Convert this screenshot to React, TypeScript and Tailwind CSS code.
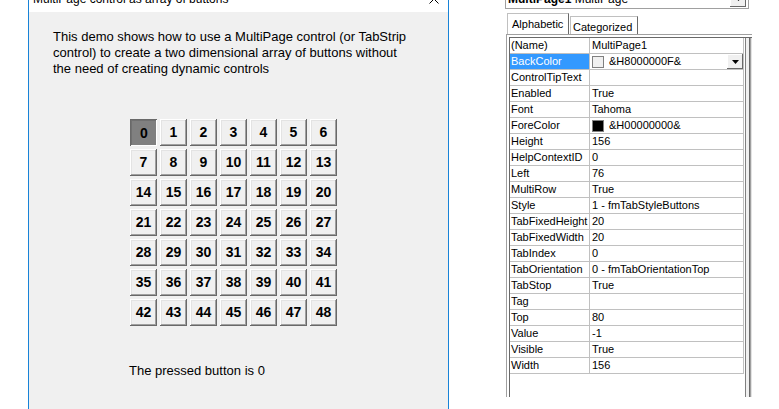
import React from "react";

const props: { name: string; value: string; swatch?: string; selected?: boolean; drop?: boolean }[] = [
  { name: "(Name)", value: "MultiPage1" },
  { name: "BackColor", value: "&H8000000F&", swatch: "bg-[#f0f0f0]", selected: true, drop: true },
  { name: "ControlTipText", value: "" },
  { name: "Enabled", value: "True" },
  { name: "Font", value: "Tahoma" },
  { name: "ForeColor", value: "&H00000000&", swatch: "bg-black" },
  { name: "Height", value: "156" },
  { name: "HelpContextID", value: "0" },
  { name: "Left", value: "76" },
  { name: "MultiRow", value: "True" },
  { name: "Style", value: "1 - fmTabStyleButtons" },
  { name: "TabFixedHeight", value: "20" },
  { name: "TabFixedWidth", value: "20" },
  { name: "TabIndex", value: "0" },
  { name: "TabOrientation", value: "0 - fmTabOrientationTop" },
  { name: "TabStop", value: "True" },
  { name: "Tag", value: "" },
  { name: "Top", value: "80" },
  { name: "Value", value: "-1" },
  { name: "Visible", value: "True" },
  { name: "Width", value: "156" },
];

const DownArrow = () => (
  <svg width="7" height="4" viewBox="0 0 7 4">
    <path d="M0 0h7L3.5 4z" fill="#000" />
  </svg>
);

export default function App() {
  const pressed = 0;
  const cells = Array.from({ length: 49 }, (_, i) => i);

  return (
    <div className="w-[779px] h-[409px] bg-white overflow-hidden flex font-['Liberation_Sans',Arial,sans-serif] text-black">
      {/* UserForm window */}
      <div className="ml-[28px] w-[421px] h-full border-x border-[#1883d7] flex flex-col">
        <div className="relative h-[12px] bg-white overflow-hidden shrink-0">
          <div className="absolute left-[4px] top-[-9px] text-[12px] leading-[16px] whitespace-nowrap">
            MultiPage control as array of buttons
          </div>
          <svg className="absolute left-[400px] top-[-6px]" width="10" height="10" viewBox="0 0 10 10">
            <path d="M0.5 0.5l9 9M9.5 0.5l-9 9" stroke="#000" strokeWidth="1" />
          </svg>
        </div>
        <div className="flex-1 bg-[#f0f0f0] pt-[17px] pl-[24px] flex flex-col">
          <p className="text-[13px] leading-[16px]">
            This demo shows how to use a MultiPage control (or TabStrip
            <br />
            control) to create a two dimensional array of buttons without
            <br />
            the need of creating dynamic controls
          </p>

          <div className="mt-[42px] ml-[77px] grid grid-cols-[repeat(7,27px)] gap-[3px]">
            {cells.map((n) =>
              n === pressed ? (
                <div
                  key={n}
                  className="h-[27px] flex items-center justify-center pt-[2px] pl-[1px] bg-[#808080] text-[14px] font-bold shadow-[inset_1px_1px_#696969,inset_-1px_-1px_#ffffff,inset_2px_2px_#707070]"
                >
                  {n}
                </div>
              ) : (
                <div
                  key={n}
                  className="h-[27px] flex items-center justify-center bg-[#f0f0f0] text-[14px] font-bold shadow-[inset_-1px_-1px_#696969,inset_1px_1px_#ffffff,inset_-2px_-2px_#a0a0a0,inset_2px_2px_#e3e3e3]"
                >
                  {n}
                </div>
              )
            )}
          </div>

          <p className="mt-[37px] ml-[76px] text-[13px] leading-[16px]">The pressed button is {pressed}</p>
        </div>
      </div>

      {/* Properties window */}
      <div className="ml-[56px] w-[250px] flex flex-col text-[11px]">
        <div className="-mt-[12px] h-[21px] w-[244px] border border-[#a0a0a0] flex items-center shrink-0">
          <span className="pl-[2px] text-[12px] leading-[16px] whitespace-nowrap">
            <b>MultiPage1</b> MultiPage
          </span>
          <div className="ml-auto mr-[2px] w-[16px] h-[17px] bg-[#f0f0f0] flex items-center justify-center shadow-[inset_-1px_-1px_#696969,inset_1px_1px_#ffffff]">
            <DownArrow />
          </div>
        </div>

        <div className="mt-[4px] h-[21px] flex items-end shrink-0">
          <div className="ml-[2px] w-[62px] h-[21px] border-t border-l border-[#c0c0c0] border-r border-r-[#696969] pl-[4px] pt-[3px] leading-[14px]">
            Alphabetic
          </div>
          <div className="ml-[1px] w-[68px] h-[18px] border-t border-l border-[#c0c0c0] border-r border-r-[#696969] pl-[2px] pt-[3px] leading-[14px]">
            Categorized
          </div>
        </div>

        <div className="ml-[1px] h-[363px] w-[246px] border-t border-l border-[#a0a0a0] pt-[2px] pl-[2px] flex">
          <div className="flex-1 border-t border-l border-[#696969] flex">
            <div className="w-[234px] flex flex-col">
              {props.map((p) => (
                <div key={p.name} className="h-[16px] flex border-b border-[#c0c0c0]">
                  <div
                    className={`w-[80px] border-r border-[#c0c0c0] pl-[1px] leading-[15px] whitespace-nowrap ${
                      p.selected ? "bg-[#3399ff] text-white" : ""
                    }`}
                  >
                    {p.name}
                  </div>
                  <div className="flex-1 border-r border-[#c0c0c0] pl-[2px] flex items-center whitespace-nowrap">
                    {p.swatch && (
                      <span className={`w-[12px] h-[12px] mr-[5px] border border-[#808080] ${p.swatch}`} />
                    )}
                    <span className="leading-[15px]">{p.value}</span>
                    {p.drop && (
                      <div className="ml-auto w-[16px] h-[15px] bg-[#f0f0f0] flex items-center justify-center shadow-[inset_-1px_-1px_#696969,inset_1px_1px_#ffffff]">
                        <DownArrow />
                      </div>
                    )}
                  </div>
                </div>
              ))}
            </div>
            <div className="w-[8px] flex">
              <div className="w-[1px] bg-white" />
              <div className="w-[1px] bg-[#808080]" />
              <div className="w-[3px] bg-[#f0f0f0]" />
              <div className="w-[1px] bg-[#696969]" />
              <div className="w-[1px] bg-[#a0a0a0]" />
              <div className="w-[1px] bg-[#e3e3e3]" />
            </div>
          </div>
        </div>
      </div>
    </div>
  );
}
